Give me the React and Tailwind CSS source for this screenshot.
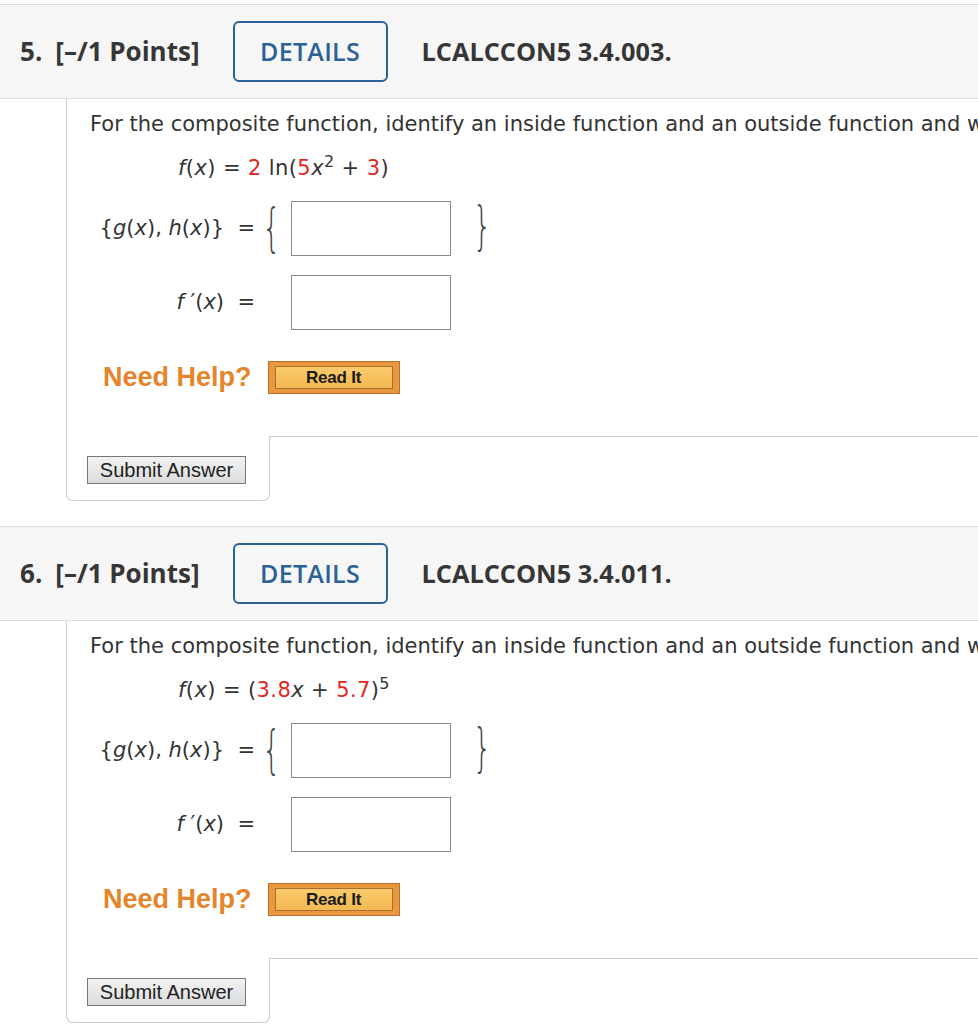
import React from 'react';

const red = 'text-[#e3261c]';

const Brace = ({ children }) => (
  <span className="inline-block font-['DejaVu_Sans',sans-serif] text-[29px] leading-none font-light text-[#444] scale-y-[1.75] origin-center">
    {children}
  </span>
);

const Question = ({ num, code, formula }) => (
  <div className="mb-[25px]">
    {/* Header band */}
    <div className="h-[95px] bg-[#f6f6f6] border-y border-[#dddddd] flex items-center pl-[20px] font-['Open_Sans',sans-serif] text-[#363636]">
      <span className="text-[26px] font-bold">{num}.</span>
      <span className="text-[26px] font-bold ml-[13px]">[–/1 Points]</span>
      <div className="ml-[33px] w-[155px] h-[61px] border-[2.5px] border-[#2a6196] rounded-[6px] flex items-center justify-center text-[#2a6196] text-[25px] font-semibold tracking-[0.3px]">
        DETAILS
      </div>
      <span className="ml-[34px] text-[25.3px] font-bold">{code}</span>
    </div>

    {/* Body */}
    <div className="ml-[66px] border-l border-[#cccccc] pl-[23px] pt-[12px] pb-[42px] font-['DejaVu_Sans',sans-serif] text-[#333] text-[21px] overflow-hidden">
      <p className="leading-[26px] whitespace-nowrap">
        For the composite function, identify an inside function and an outside function and write the composite function in the form f(g(x)).
      </p>
      <p className="mt-[18px] ml-[88px] leading-[26px] whitespace-nowrap tracking-[0.4px]">{formula}</p>

      <div className="mt-[20px] flex items-center h-[55px]">
        <div className="w-[168px] text-right whitespace-nowrap pr-[3px]">
          {'{'}<i>g</i>(<i>x</i>), <i>h</i>(<i>x</i>){'}'}&nbsp; =
        </div>
        <div className="w-[33px] flex justify-center pr-[6px]">
          <Brace>{'{'}</Brace>
        </div>
        <div className="w-[160px] h-[55px] border border-[#8a8a8a] bg-white" />
        <div className="ml-[22px]">
          <Brace>{'}'}</Brace>
        </div>
      </div>

      <div className="mt-[19px] flex items-center h-[55px]">
        <div className="w-[168px] text-right whitespace-nowrap pr-[3px]">
          <i>f</i> ′(<i>x</i>)&nbsp; =
        </div>
        <div className="w-[33px]" />
        <div className="w-[160px] h-[55px] border border-[#8a8a8a] bg-white" />
      </div>

      <div className="mt-[31px] flex items-center ml-[13px]">
        <span className="font-['Liberation_Sans',sans-serif] font-bold text-[27px] text-[#e5852b] leading-none">
          Need Help?
        </span>
        <div className="ml-[16px] w-[132px] h-[33px] border border-[#b9702c] bg-[#ea983f] flex items-center justify-center">
          <div className="w-[118px] h-[23px] border border-[#a8702c] bg-gradient-to-b from-[#f9ca6c] to-[#f3b851] flex items-center justify-center font-['Liberation_Sans',sans-serif] font-bold text-[17px] text-[#1a1a1a] tracking-[-0.2px]">
            Read It
          </div>
        </div>
      </div>
    </div>

    {/* Submit tab */}
    <div className="ml-[66px] flex">
      <div className="w-[204px] h-[65px] border-x border-b border-[#cccccc] rounded-b-[7px] pl-[20px] pt-[20px]">
        <button className="w-[159px] h-[28px] border border-[#777] bg-gradient-to-b from-[#f2f2f2] to-[#dcdcdc] font-['Liberation_Sans',sans-serif] text-[20px] text-[#222] leading-none">
          Submit Answer
        </button>
      </div>
      <div className="flex-1 -ml-px border-t border-[#cccccc]" />
    </div>
  </div>
);

export default function App() {
  return (
    <div className="w-[978px] h-[1026px] overflow-hidden bg-white pt-[4px]">
      <Question
        num="5"
        code="LCALCCON5 3.4.003."
        formula={
          <>
            <i>f</i>(<i>x</i>) = <span className={red}>2</span> ln(<span className={red}>5</span><i>x</i>
            <sup className="text-[16px]">2</sup> + <span className={red}>3</span>)
          </>
        }
      />
      <Question
        num="6"
        code="LCALCCON5 3.4.011."
        formula={
          <>
            <i>f</i>(<i>x</i>) = (<span className={red}>3.8</span><i>x</i> + <span className={red}>5.7</span>)
            <sup className="text-[16px]">5</sup>
          </>
        }
      />
    </div>
  );
}
